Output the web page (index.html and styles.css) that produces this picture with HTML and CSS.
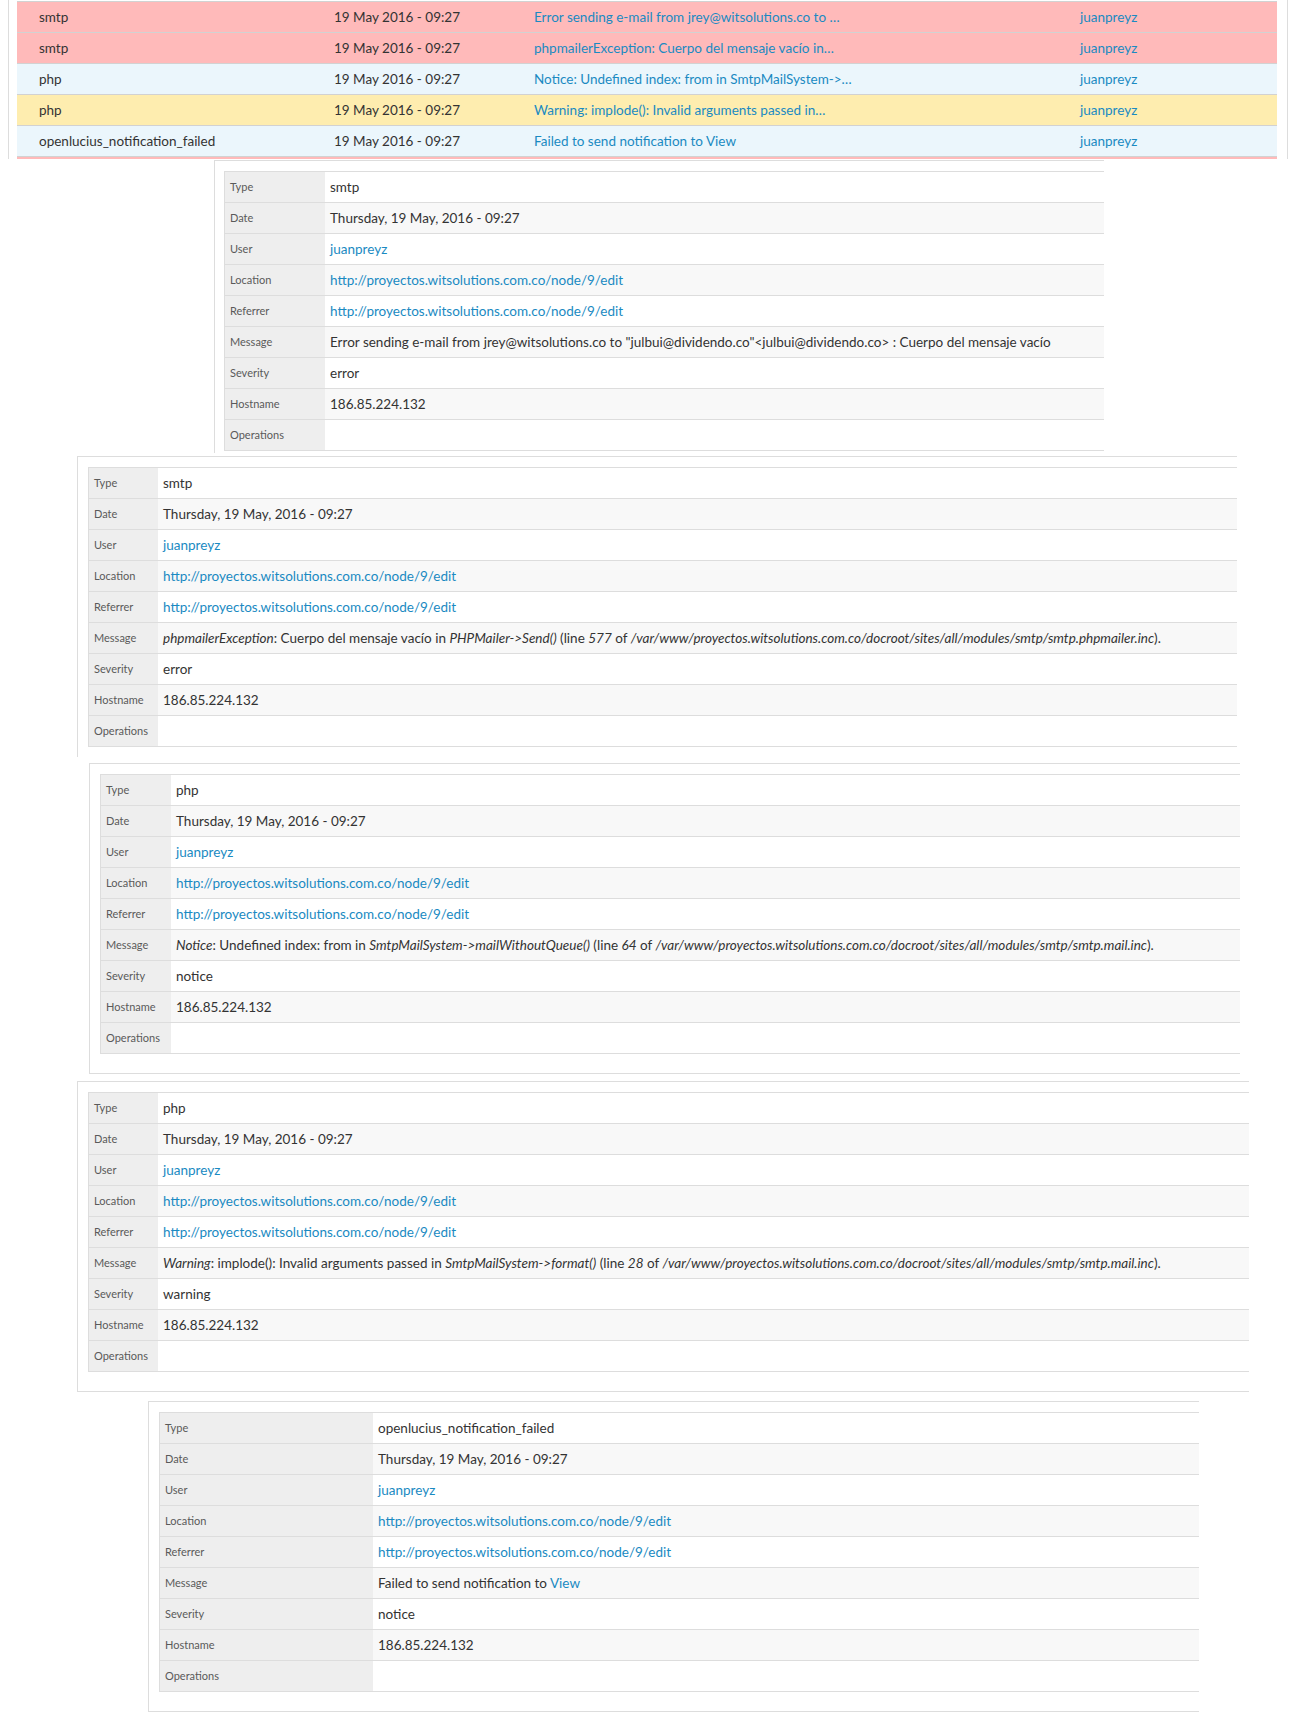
FILE: index.html
```html
<!DOCTYPE html>
<html lang="en">
<head>
<meta charset="utf-8">
<title>Recent log messages</title>
<link rel="stylesheet" href="styles.css">
</head>
<body>
<div class="log-panel">
  <table class="log-table">
    <colgroup>
      <col class="c-icon"><col class="c-type"><col class="c-date"><col class="c-msg"><col class="c-user">
    </colgroup>
    <tbody>
      <tr class="sev-error"><td></td><td>smtp</td><td>19 May 2016 - 09:27</td><td><a href="#">Error sending e-mail from jrey@witsolutions.co to …</a></td><td><a href="#">juanpreyz</a></td></tr>
      <tr class="sev-error"><td></td><td>smtp</td><td>19 May 2016 - 09:27</td><td><a href="#">phpmailerException: Cuerpo del mensaje vacío in…</a></td><td><a href="#">juanpreyz</a></td></tr>
      <tr class="sev-notice"><td></td><td>php</td><td>19 May 2016 - 09:27</td><td><a href="#">Notice: Undefined index: from in SmtpMailSystem-&gt;…</a></td><td><a href="#">juanpreyz</a></td></tr>
      <tr class="sev-warning"><td></td><td>php</td><td>19 May 2016 - 09:27</td><td><a href="#">Warning: implode(): Invalid arguments passed in…</a></td><td><a href="#">juanpreyz</a></td></tr>
      <tr class="sev-notice"><td></td><td>openlucius_notification_failed</td><td>19 May 2016 - 09:27</td><td><a href="#">Failed to send notification to View</a></td><td><a href="#">juanpreyz</a></td></tr>
      <tr class="sev-error"><td></td><td></td><td></td><td></td><td></td></tr>
    </tbody>
  </table>
</div>

<div class="detail d1">
  <table class="event">
    <tbody>
      <tr><th>Type</th><td>smtp</td></tr>
      <tr><th>Date</th><td>Thursday, 19 May, 2016 - 09:27</td></tr>
      <tr><th>User</th><td><a href="#">juanpreyz</a></td></tr>
      <tr><th>Location</th><td><a href="#">http://proyectos.witsolutions.com.co/node/9/edit</a></td></tr>
      <tr><th>Referrer</th><td><a href="#">http://proyectos.witsolutions.com.co/node/9/edit</a></td></tr>
      <tr><th>Message</th><td>Error sending e-mail from jrey@witsolutions.co to "julbui@dividendo.co"&lt;julbui@dividendo.co&gt; : Cuerpo del mensaje vacío</td></tr>
      <tr><th>Severity</th><td>error</td></tr>
      <tr><th>Hostname</th><td>186.85.224.132</td></tr>
      <tr><th>Operations</th><td></td></tr>
    </tbody>
  </table>
</div>

<div class="detail d2">
  <table class="event">
    <tbody>
      <tr><th>Type</th><td>smtp</td></tr>
      <tr><th>Date</th><td>Thursday, 19 May, 2016 - 09:27</td></tr>
      <tr><th>User</th><td><a href="#">juanpreyz</a></td></tr>
      <tr><th>Location</th><td><a href="#">http://proyectos.witsolutions.com.co/node/9/edit</a></td></tr>
      <tr><th>Referrer</th><td><a href="#">http://proyectos.witsolutions.com.co/node/9/edit</a></td></tr>
      <tr><th>Message</th><td><em>phpmailerException</em>: Cuerpo del mensaje vacío in <em>PHPMailer-&gt;Send()</em> (line <em>577</em> of <em>/var/www/proyectos.witsolutions.com.co/docroot/sites/all/modules/smtp/smtp.phpmailer.inc</em>).</td></tr>
      <tr><th>Severity</th><td>error</td></tr>
      <tr><th>Hostname</th><td>186.85.224.132</td></tr>
      <tr><th>Operations</th><td></td></tr>
    </tbody>
  </table>
</div>

<div class="detail d3">
  <table class="event">
    <tbody>
      <tr><th>Type</th><td>php</td></tr>
      <tr><th>Date</th><td>Thursday, 19 May, 2016 - 09:27</td></tr>
      <tr><th>User</th><td><a href="#">juanpreyz</a></td></tr>
      <tr><th>Location</th><td><a href="#">http://proyectos.witsolutions.com.co/node/9/edit</a></td></tr>
      <tr><th>Referrer</th><td><a href="#">http://proyectos.witsolutions.com.co/node/9/edit</a></td></tr>
      <tr><th>Message</th><td><em>Notice</em>: Undefined index: from in <em>SmtpMailSystem-&gt;mailWithoutQueue()</em> (line <em>64</em> of <em>/var/www/proyectos.witsolutions.com.co/docroot/sites/all/modules/smtp/smtp.mail.inc</em>).</td></tr>
      <tr><th>Severity</th><td>notice</td></tr>
      <tr><th>Hostname</th><td>186.85.224.132</td></tr>
      <tr><th>Operations</th><td></td></tr>
    </tbody>
  </table>
</div>

<div class="detail d4">
  <table class="event">
    <tbody>
      <tr><th>Type</th><td>php</td></tr>
      <tr><th>Date</th><td>Thursday, 19 May, 2016 - 09:27</td></tr>
      <tr><th>User</th><td><a href="#">juanpreyz</a></td></tr>
      <tr><th>Location</th><td><a href="#">http://proyectos.witsolutions.com.co/node/9/edit</a></td></tr>
      <tr><th>Referrer</th><td><a href="#">http://proyectos.witsolutions.com.co/node/9/edit</a></td></tr>
      <tr><th>Message</th><td><em>Warning</em>: implode(): Invalid arguments passed in <em>SmtpMailSystem-&gt;format()</em> (line <em>28</em> of <em>/var/www/proyectos.witsolutions.com.co/docroot/sites/all/modules/smtp/smtp.mail.inc</em>).</td></tr>
      <tr><th>Severity</th><td>warning</td></tr>
      <tr><th>Hostname</th><td>186.85.224.132</td></tr>
      <tr><th>Operations</th><td></td></tr>
    </tbody>
  </table>
</div>

<div class="detail d5">
  <table class="event">
    <tbody>
      <tr><th>Type</th><td>openlucius_notification_failed</td></tr>
      <tr><th>Date</th><td>Thursday, 19 May, 2016 - 09:27</td></tr>
      <tr><th>User</th><td><a href="#">juanpreyz</a></td></tr>
      <tr><th>Location</th><td><a href="#">http://proyectos.witsolutions.com.co/node/9/edit</a></td></tr>
      <tr><th>Referrer</th><td><a href="#">http://proyectos.witsolutions.com.co/node/9/edit</a></td></tr>
      <tr><th>Message</th><td>Failed to send notification to <a href="#">View</a></td></tr>
      <tr><th>Severity</th><td>notice</td></tr>
      <tr><th>Hostname</th><td>186.85.224.132</td></tr>
      <tr><th>Operations</th><td></td></tr>
    </tbody>
  </table>
</div>
</body>
</html>
```

FILE: styles.css
```css
* { box-sizing: border-box; }

body {
  margin: 0;
  background: #fff;
  font-family: Lato, "Open Sans", sans-serif;
  font-size: 13.5px;
  color: #333;
}

a { color: #1a8ac2; text-decoration: none; }
em { font-style: italic; }

/* ---- top log list ---- */
.log-panel {
  margin-left: 8px;
  width: 1280px;
  height: 159px;
  overflow: hidden;
  border-left: 1px solid #ddd;
  border-right: 1px solid #ddd;
  padding: 1px 10px 0 8px;
}

.log-table {
  width: 1260px;
  table-layout: fixed;
  border-collapse: separate;
  border-spacing: 0;
}
.c-icon { width: 14px; }
.c-type { width: 295px; }
.c-date { width: 200px; }
.c-msg  { width: 546px; }
.c-user { width: 205px; }

.log-table td {
  border-top: 1px solid #d2d2d2;
  padding: 0 8px;
  line-height: 30px;
  height: 31px;
  white-space: nowrap;
  overflow: hidden;
}
.log-table td:first-child { padding: 0; }

.sev-error   td { background: #ffbaba; }
.sev-notice  td { background: #ebf6fc; }
.sev-warning td { background: #feedaf; }

/* ---- detail blocks ---- */
.detail {
  border-top: 1px solid #ddd;
  border-left: 1px solid #ddd;
  padding: 10px 0 10px 10px;
}
.d1 { margin: 1px 0 0 214px; width: 890px; padding-left: 9px; padding-bottom: 2px; }
.d2 { margin: 3px 0 0 77px; width: 1160px; }
.d3 { margin: 6px 0 0 89px; width: 1151px; border-bottom: 1px solid #ddd; padding-bottom: 19px; }
.d4 { margin: 7px 0 0 77px; width: 1172px; border-bottom: 1px solid #ddd; padding-bottom: 19px; }
.d5 { margin: 9px 0 4px 148px; width: 1051px; border-bottom: 1px solid #ddd; padding-bottom: 19px; }

.event {
  width: 100%;
  border-collapse: separate;
  border-spacing: 0;
}
.event th,
.event td {
  border-top: 1px solid #ddd;
  height: 31px;
  line-height: 30px;
  padding: 0 6px;
  text-align: left;
  vertical-align: middle;
  white-space: nowrap;
}
.event tr:last-child th,
.event tr:last-child td { border-bottom: 1px solid #ddd; height: 32px; }
.event th {
  background: #eee;
  border-left: 1px solid #ddd;
  padding-left: 5px;
  font-weight: normal;
  font-size: 11px;
  color: #5a5a5a;
}
.event td { background: #fff; padding-left: 5px; }
.event tr:nth-child(even) td { background: #f8f8f8; }

.d1 .event th { width: 101px; }
.d2 .event th { width: 70px; }
.d3 .event th { width: 71px; }
.d4 .event th { width: 70px; }
.d5 .event th { width: 214px; }
```
